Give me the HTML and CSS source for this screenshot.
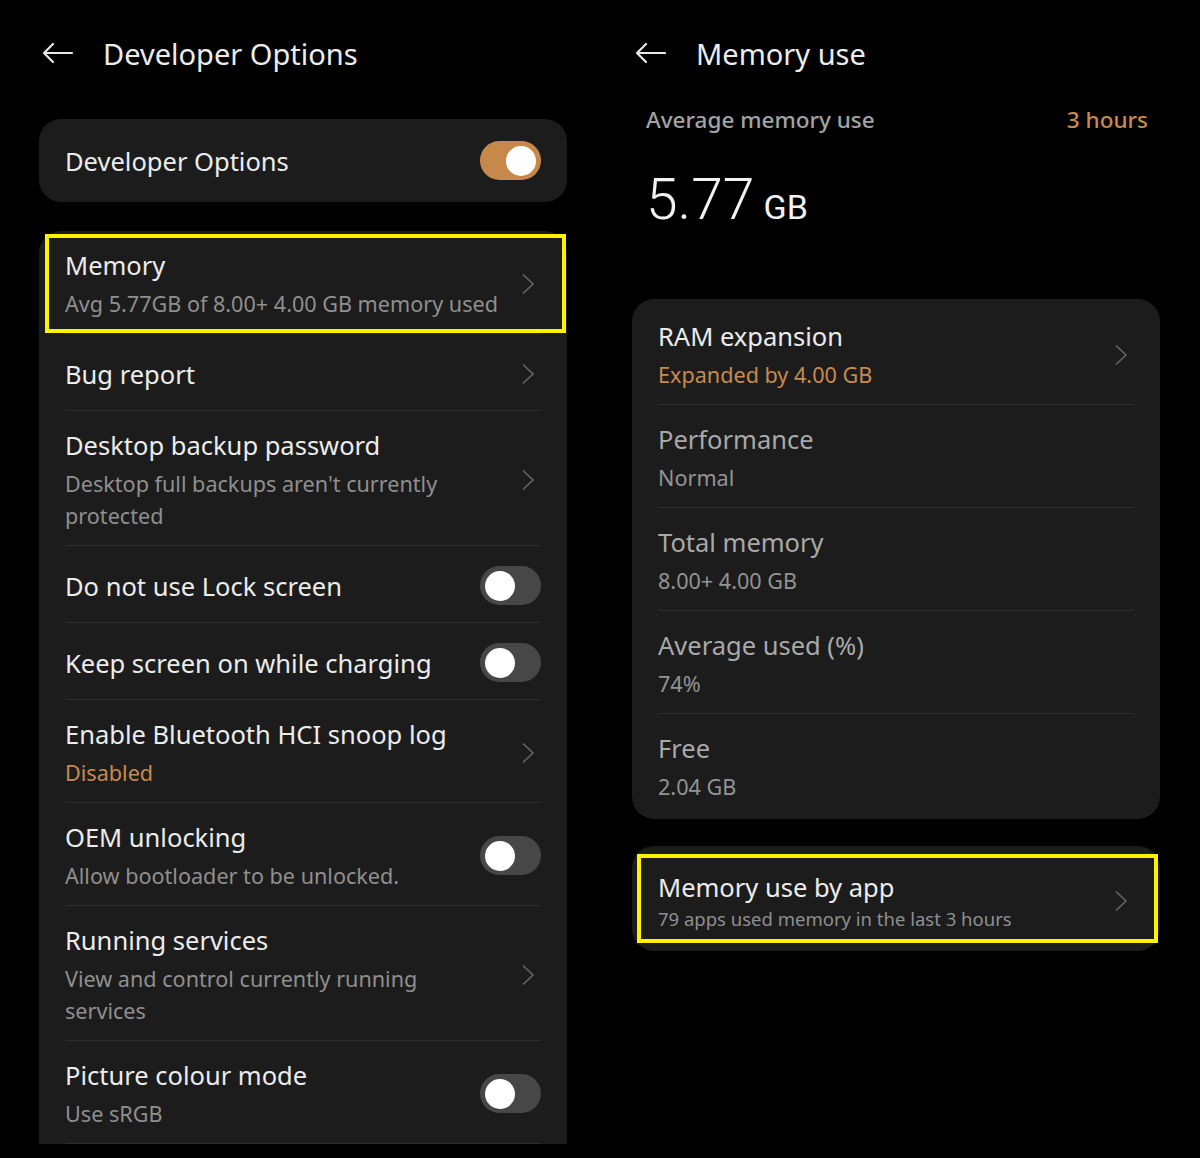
FILE: index.html
```html
<!DOCTYPE html>
<html lang="en">
<head>
    <meta charset="UTF-8">
    <meta name="viewport" content="width=device-width, initial-scale=1.0">
    <title>Developer Options / Memory use</title>
    <link rel="stylesheet" href="styles.css">
</head>
<body>

<div class="screens">

    <!-- Developer Options screen -->
    <section class="screen screen-dev">
        <div class="topbar">
            <svg class="back" width="30" height="22" viewBox="0 0 30 22">
                <path d="M1 11 H29 M10 2 L1 11 L10 20" />
            </svg>
            <h1>Developer Options</h1>
        </div>

        <div class="card card-switch">
            <span class="row-title">Developer Options</span>
            <span class="toggle on"></span>
        </div>

        <div class="card list">
            <div class="row marked">
                <div class="row-text">
                    <div class="row-title">Memory</div>
                    <div class="row-sub">Avg 5.77GB of 8.00+ 4.00 GB memory used</div>
                </div>
                <svg class="chevron" width="14" height="22" viewBox="0 0 14 22"><path d="M2 1.5 L12 11 L2 20.5" /></svg>
            </div>
            <div class="row">
                <div class="row-text">
                    <div class="row-title">Bug report</div>
                </div>
                <svg class="chevron" width="14" height="22" viewBox="0 0 14 22"><path d="M2 1.5 L12 11 L2 20.5" /></svg>
            </div>
            <div class="row">
                <div class="row-text">
                    <div class="row-title">Desktop backup password</div>
                    <div class="row-sub">Desktop full backups aren't currently protected</div>
                </div>
                <svg class="chevron" width="14" height="22" viewBox="0 0 14 22"><path d="M2 1.5 L12 11 L2 20.5" /></svg>
            </div>
            <div class="row">
                <div class="row-text">
                    <div class="row-title">Do not use Lock screen</div>
                </div>
                <span class="toggle"></span>
            </div>
            <div class="row">
                <div class="row-text">
                    <div class="row-title">Keep screen on while charging</div>
                </div>
                <span class="toggle"></span>
            </div>
            <div class="row">
                <div class="row-text">
                    <div class="row-title">Enable Bluetooth HCI snoop log</div>
                    <div class="row-sub accent">Disabled</div>
                </div>
                <svg class="chevron" width="14" height="22" viewBox="0 0 14 22"><path d="M2 1.5 L12 11 L2 20.5" /></svg>
            </div>
            <div class="row">
                <div class="row-text">
                    <div class="row-title">OEM unlocking</div>
                    <div class="row-sub">Allow bootloader to be unlocked.</div>
                </div>
                <span class="toggle"></span>
            </div>
            <div class="row">
                <div class="row-text">
                    <div class="row-title">Running services</div>
                    <div class="row-sub">View and control currently running services</div>
                </div>
                <svg class="chevron" width="14" height="22" viewBox="0 0 14 22"><path d="M2 1.5 L12 11 L2 20.5" /></svg>
            </div>
            <div class="row">
                <div class="row-text">
                    <div class="row-title">Picture colour mode</div>
                    <div class="row-sub">Use sRGB</div>
                </div>
                <span class="toggle"></span>
            </div>
        </div>
    </section>

    <!-- Memory use screen -->
    <section class="screen screen-mem">
        <div class="topbar">
            <svg class="back" width="30" height="22" viewBox="0 0 30 22">
                <path d="M1 11 H29 M10 2 L1 11 L10 20" />
            </svg>
            <h1>Memory use</h1>
        </div>

        <div class="summary">
            <div class="summary-head">
                <span>Average memory use</span>
                <span class="accent">3 hours</span>
            </div>
            <div class="summary-value">5.77<span class="unit">GB</span></div>
        </div>

        <div class="card stats">
            <div class="row">
                <div class="row-text">
                    <div class="row-title">RAM expansion</div>
                    <div class="row-sub accent">Expanded by 4.00 GB</div>
                </div>
                <svg class="chevron" width="14" height="22" viewBox="0 0 14 22"><path d="M2 1.5 L12 11 L2 20.5" /></svg>
            </div>
            <div class="row dim">
                <div class="row-text">
                    <div class="row-title">Performance</div>
                    <div class="row-sub">Normal</div>
                </div>
            </div>
            <div class="row dim">
                <div class="row-text">
                    <div class="row-title">Total memory</div>
                    <div class="row-sub">8.00+ 4.00 GB</div>
                </div>
            </div>
            <div class="row dim">
                <div class="row-text">
                    <div class="row-title">Average used (%)</div>
                    <div class="row-sub">74%</div>
                </div>
            </div>
            <div class="row dim">
                <div class="row-text">
                    <div class="row-title">Free</div>
                    <div class="row-sub">2.04 GB</div>
                </div>
            </div>
        </div>

        <div class="card apps">
            <div class="row marked">
                <div class="row-text">
                    <div class="row-title">Memory use by app</div>
                    <div class="row-sub small">79 apps used memory in the last 3 hours</div>
                </div>
                <svg class="chevron" width="14" height="22" viewBox="0 0 14 22"><path d="M2 1.5 L12 11 L2 20.5" /></svg>
            </div>
        </div>
    </section>

</div>

</body>
</html>
```

FILE: styles.css
```css
body {
    margin: 0;
    background-color: #000;
    color: #e8e8e8;
    font-family: "Noto Sans", "Open Sans", sans-serif;
    height: 1158px;
    overflow: hidden;
}

.screens {
    display: flex;
}

.screen {
    box-sizing: border-box;
}

.screen-dev {
    width: 593px;
    padding-left: 39px;
}

.screen-mem {
    width: 607px;
    padding-left: 39px;
}

.card {
    width: 528px;
    background-color: #1c1c1c;
    border-radius: 22px;
}

/* Top bar with back arrow */
.topbar {
    height: 106px;
    display: flex;
    align-items: center;
}

.topbar .back {
    margin-left: 4px;
    margin-right: 30px;
}

.back path {
    fill: none;
    stroke: #e8e8e8;
    stroke-width: 2.2;
    stroke-linecap: round;
    stroke-linejoin: round;
}

.topbar h1 {
    margin: 0;
    font-size: 29px;
    font-weight: 400;
    color: #ececec;
}

/* Master switch card */
.card-switch {
    margin-top: 13px;
    height: 83px;
    box-sizing: border-box;
    padding: 0 26px;
    display: flex;
    align-items: center;
    justify-content: space-between;
}

.list {
    margin-top: 29px;
    border-radius: 22px 22px 0 0;
}

/* List rows */
.row {
    position: relative;
    margin: 0 26px;
    min-height: 77px;
    box-sizing: border-box;
    padding: 16px 0 13px;
    border-bottom: 1px solid #2d2d2d;
    display: flex;
    align-items: center;
    gap: 20px;
}

.row-text {
    flex: 1;
}

.row-title {
    font-size: 25.5px;
    line-height: 36px;
    color: #ececec;
}

.row-sub {
    margin-top: 5px;
    font-size: 21.6px;
    line-height: 32px;
    color: #8f8f8f;
}

.row-sub.small {
    margin-top: 0;
    font-size: 18.5px;
    line-height: 28px;
}

.accent {
    color: #c88a4e;
}

.row-sub.accent {
    color: #c88a4e;
}

.dim .row-title {
    color: #a9a9a9;
}

.dim .row-sub {
    color: #939393;
}

.chevron {
    flex-shrink: 0;
    margin-right: 6px;
}

.chevron path {
    fill: none;
    stroke: #666;
    stroke-width: 1.6;
}

/* Switches */
.toggle {
    position: relative;
    flex-shrink: 0;
    width: 61px;
    height: 39px;
    border-radius: 20px;
    background-color: #474747;
}

.toggle::after {
    content: "";
    position: absolute;
    top: 4.5px;
    left: 5px;
    width: 30px;
    height: 30px;
    border-radius: 50%;
    background-color: #fff;
}

.toggle.on {
    background-color: #c7884b;
}

.toggle.on::after {
    left: 26px;
}

/* Highlight frame over a row */
.marked::after {
    content: "";
    position: absolute;
    top: 3px;
    bottom: 0;
    left: -20px;
    right: -25px;
    border: 4px solid #fff200;
    pointer-events: none;
}

/* Memory summary */
.summary {
    width: 528px;
    box-sizing: border-box;
    padding: 0 12px 0 14px;
}

.summary-head {
    display: flex;
    justify-content: space-between;
    font-size: 22.5px;
    font-weight: 500;
    line-height: 28px;
    color: #a3a3a3;
}

.summary-value {
    margin-top: 31px;
    font-family: Roboto, sans-serif;
    font-size: 57px;
    font-weight: 300;
    line-height: 70px;
    color: #f2f2f2;
}

.summary-value .unit {
    margin-left: 9px;
    font-size: 34px;
    font-weight: 400;
}

.stats {
    margin-top: 57px;
    padding: 3px 0;
}

.stats .row:last-child {
    border-bottom: none;
}

.apps {
    margin-top: 27px;
    padding: 3px 0;
}

.apps .row {
    border-bottom: none;
    padding: 20px 0 15px;
}

.apps .marked::after {
    top: 5px;
    bottom: 5px;
    left: -21px;
    right: -24px;
}
```
